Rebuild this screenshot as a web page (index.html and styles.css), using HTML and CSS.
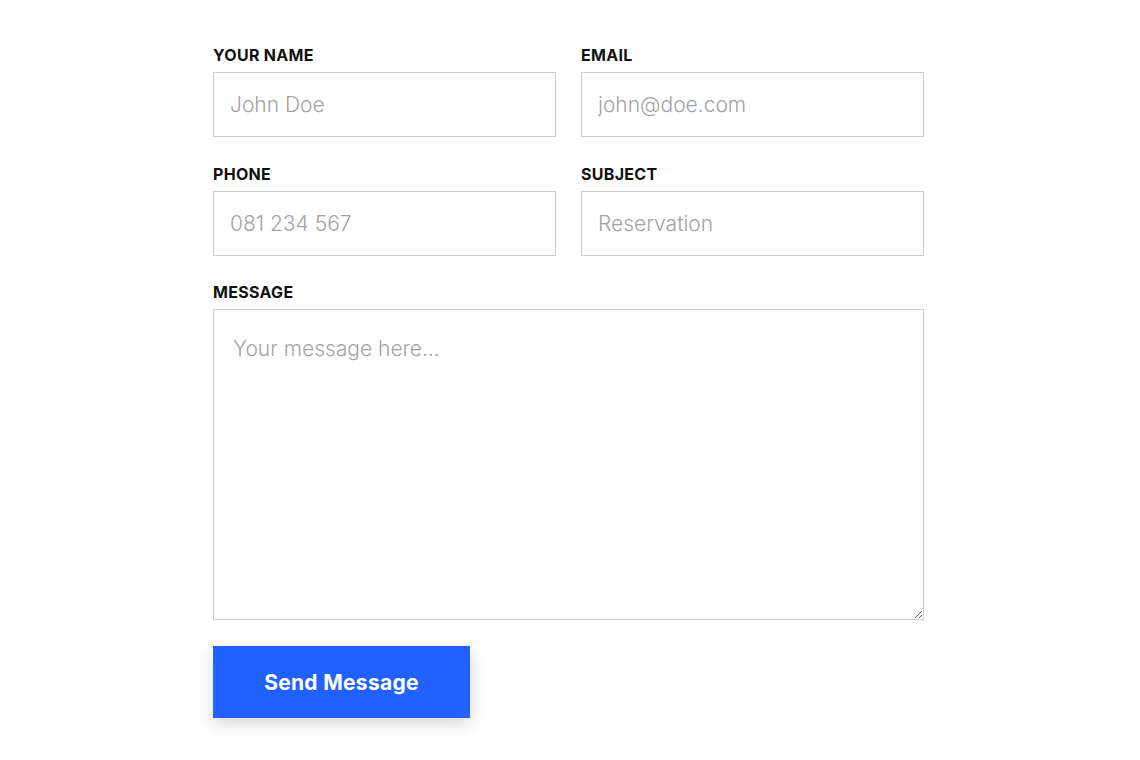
FILE: index.html
```html
<!DOCTYPE html>
<html lang="en">
<head>
<meta charset="utf-8">
<title>Contact</title>
<link rel="stylesheet" href="styles.css">
</head>
<body>
<form class="contact-form">
  <div class="row">
    <div class="field">
      <label class="label" for="name">YOUR NAME</label>
      <input class="input" id="name" type="text" placeholder="John Doe">
    </div>
    <div class="field">
      <label class="label" for="email">EMAIL</label>
      <input class="input" id="email" type="email" placeholder="john@doe.com">
    </div>
  </div>
  <div class="row">
    <div class="field">
      <label class="label" for="phone">PHONE</label>
      <input class="input" id="phone" type="text" placeholder="081 234 567">
    </div>
    <div class="field">
      <label class="label" for="subject">SUBJECT</label>
      <input class="input" id="subject" type="text" placeholder="Reservation">
    </div>
  </div>
  <div class="field">
    <label class="label" for="message">MESSAGE</label>
    <textarea class="textarea" id="message" placeholder="Your message here..."></textarea>
  </div>
  <button class="btn" type="button">Send Message</button>
</form>
</body>
</html>
```
FILE: styles.css
```css
* { box-sizing: border-box; }
html, body { margin: 0; background: #fff; }
body {
  font-family: Inter, "Noto Sans", sans-serif;
  color: #111;
}
.contact-form {
  width: 711px;
  margin-left: 213px;
  padding: 45px 0 40px;
  display: flex;
  flex-direction: column;
  gap: 26px;
  align-items: flex-start;
}
.row {
  display: grid;
  grid-template-columns: 343px 343px;
  column-gap: 25px;
  width: 100%;
}
.field {
  display: flex;
  flex-direction: column;
  width: 100%;
}
.label {
  font-size: 16px;
  line-height: 20px;
  font-weight: 700;
  letter-spacing: 0.3px;
  color: #111;
  margin-bottom: 7px;
}
.row + .row .label { margin-top: 1px; }
.input, .textarea {
  font-family: Inter, "Noto Sans", sans-serif;
  font-size: 21px;
  font-weight: 300;
  color: #333;
  border: 1px solid #cfcfcf;
  border-radius: 0;
  background: #fff;
  outline: none;
  width: 100%;
}
.input {
  height: 65px;
  padding: 0 16px;
}
.textarea {
  height: 311px;
  padding: 26px 19px;
  resize: vertical;
}
.input::placeholder, .textarea::placeholder {
  color: #a3a3a3;
  opacity: 1;
}
.btn {
  width: 257px;
  height: 72px;
  background: #2162ff;
  color: #fff;
  border: none;
  font-family: Inter, "Noto Sans", sans-serif;
  font-size: 21px;
  font-weight: 700;
  letter-spacing: 0.3px;
  box-shadow: 0 6px 16px rgba(0, 0, 0, 0.16);
  cursor: pointer;
}
```
